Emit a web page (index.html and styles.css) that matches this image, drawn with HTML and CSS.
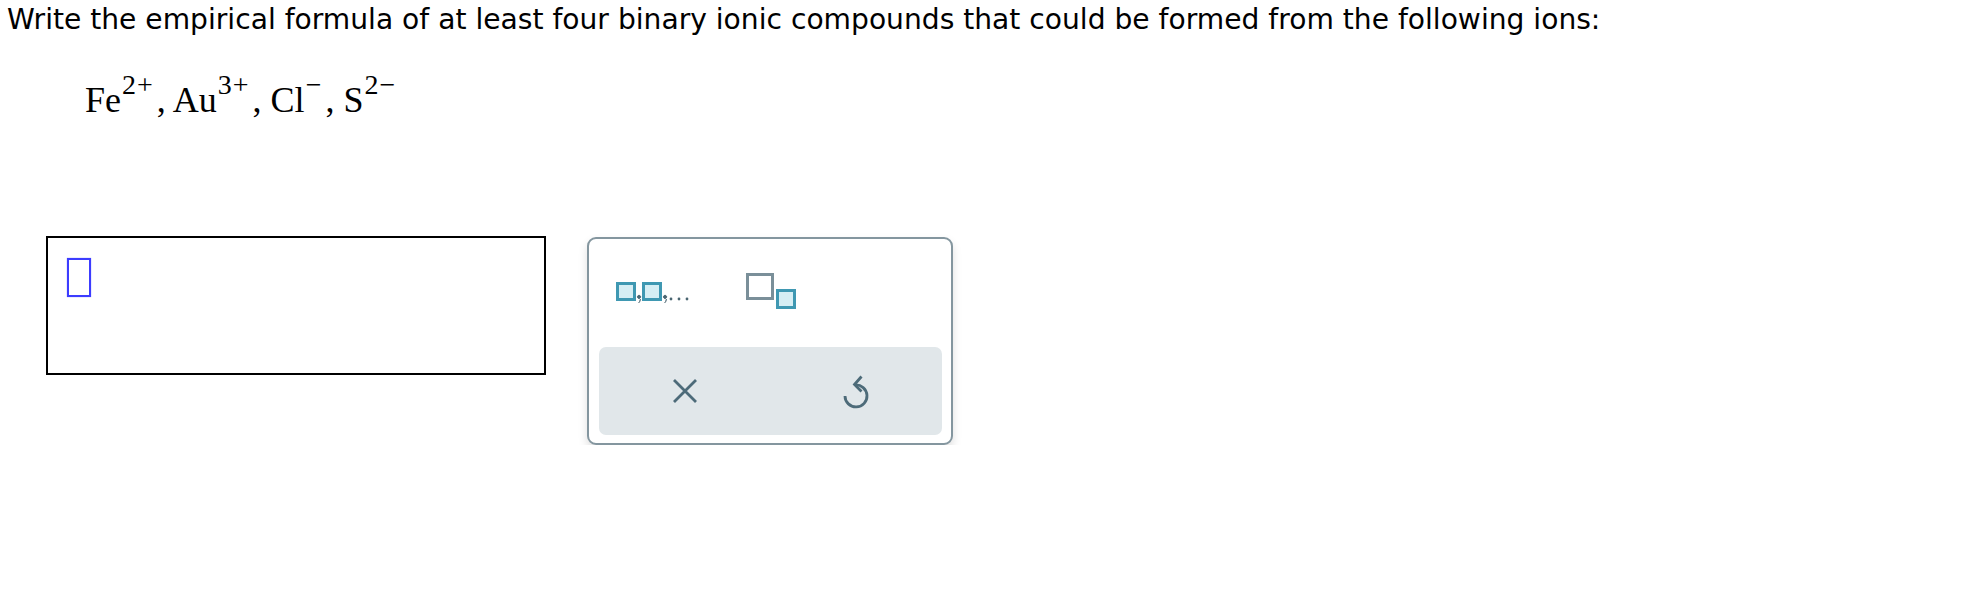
FILE: index.html
```html
<!DOCTYPE html>
<html lang="en">
<head>
<meta charset="utf-8">
<title>Empirical formulas</title>
<link rel="stylesheet" href="styles.css">
</head>
<body>
<p class="prompt">Write the empirical formula of at least four binary ionic compounds that could be formed from the following ions:</p>
<div class="ions">Fe<sup>2+</sup>, Au<sup>3+</sup>, Cl<sup>&minus;</sup>, S<sup>2&minus;</sup></div>
<div class="work">
  <div class="answer"><span class="cursor"></span></div>
  <div class="palette">
    <div class="tools">
      <button class="tool" type="button" aria-label="List">
        <svg class="icon-list" width="80" height="44" viewBox="0 0 80 44">
          <rect x="5.5" y="14.5" width="17" height="16" class="sq-blue"/>
          <rect x="31.5" y="14.5" width="17" height="16" class="sq-blue"/>
          <path d="M27 29.5 a1.6 1.6 0 1 1 0.1 0 M28.4 30 q0 2.5 -1.8 4" class="comma"/>
          <path d="M53 29.5 a1.6 1.6 0 1 1 0.1 0 M54.4 30 q0 2.5 -1.8 4" class="comma"/>
          <circle cx="59" cy="30" r="1.4" class="dot"/>
          <circle cx="67" cy="30" r="1.4" class="dot"/>
          <circle cx="75" cy="30" r="1.4" class="dot"/>
        </svg>
      </button>
      <button class="tool" type="button" aria-label="Subscript">
        <svg class="icon-sub" width="58" height="44" viewBox="0 0 58 44">
          <rect x="5.5" y="5.5" width="25" height="24" class="sq-gray"/>
          <rect x="35.5" y="21.5" width="17" height="17" class="sq-blue"/>
        </svg>
      </button>
    </div>
    <div class="actions">
      <button class="action" type="button" aria-label="Clear">
        <svg width="26" height="26" viewBox="0 0 26 26">
          <path d="M2 2 L24 24 M24 2 L2 24" class="stroke"/>
        </svg>
      </button>
      <button class="action" type="button" aria-label="Undo">
        <svg width="30" height="36" viewBox="0 0 30 36">
          <path d="M4 23 A11 11 0 1 0 14 12" class="stroke"/>
          <path d="M20.5 3.5 L13.5 11.5 L20.5 18.5" class="stroke"/>
        </svg>
      </button>
    </div>
  </div>
</div>
</body>
</html>
```

FILE: styles.css
```css
html, body {
  margin: 0;
  padding: 0;
  background: #ffffff;
}

body {
  font-family: "DejaVu Sans", Verdana, sans-serif;
  color: #000;
}

.prompt {
  margin: 0;
  padding: 5px 0 0 7px;
  font-size: 28.15px;
  line-height: 30px;
  white-space: nowrap;
}

.ions {
  margin: 43px 0 0 85px;
  font-family: "Liberation Serif", "Times New Roman", serif;
  font-size: 36px;
  line-height: 44px;
}

.ions sup {
  font-size: 28px;
  line-height: 0;
  vertical-align: 18px;
  margin: 0 3px 0 1px;
  letter-spacing: 1px;
}

.work {
  display: flex;
  align-items: flex-start;
  margin: 114px 0 0 46px;
}

.answer {
  box-sizing: border-box;
  width: 500px;
  height: 139px;
  border: 2px solid #000;
  padding: 20px 0 0 19px;
}

.cursor {
  display: block;
  box-sizing: border-box;
  width: 24px;
  height: 39px;
  border: 2px solid #3c3cff;
  box-shadow: 0 0 1px rgba(60, 60, 255, 0.6);
}

.palette {
  box-sizing: border-box;
  width: 366px;
  height: 208px;
  margin: 1px 0 0 41px;
  border: 2px solid #84969f;
  border-radius: 9px;
  background: #fff;
  box-shadow: 0 5px 10px rgba(0, 0, 0, 0.13);
  display: flex;
  flex-direction: column;
}

.tools {
  display: flex;
  align-items: flex-start;
  gap: 50px;
  height: 108px;
  padding: 29.5px 0 0 23px;
  box-sizing: border-box;
}

.tool,
.action {
  border: 0;
  padding: 0;
  margin: 0;
  background: transparent;
  display: block;
  line-height: 0;
}

.sq-blue {
  fill: #d6eef4;
  stroke: #3f98b2;
  stroke-width: 3;
}

.sq-gray {
  fill: #fff;
  stroke: #7a8f99;
  stroke-width: 3;
}

.comma {
  fill: #4a6571;
  stroke: #4a6571;
  stroke-width: 1;
}

.dot {
  fill: #4a6571;
}

.actions {
  margin: 0 9px 0 10px;
  height: 88px;
  border-radius: 7px;
  background: #e1e7ea;
  display: flex;
  align-items: center;
  justify-content: space-around;
  padding-left: 2px;
}

.stroke {
  fill: none;
  stroke: #4d6b79;
  stroke-width: 2.8;
}
```
